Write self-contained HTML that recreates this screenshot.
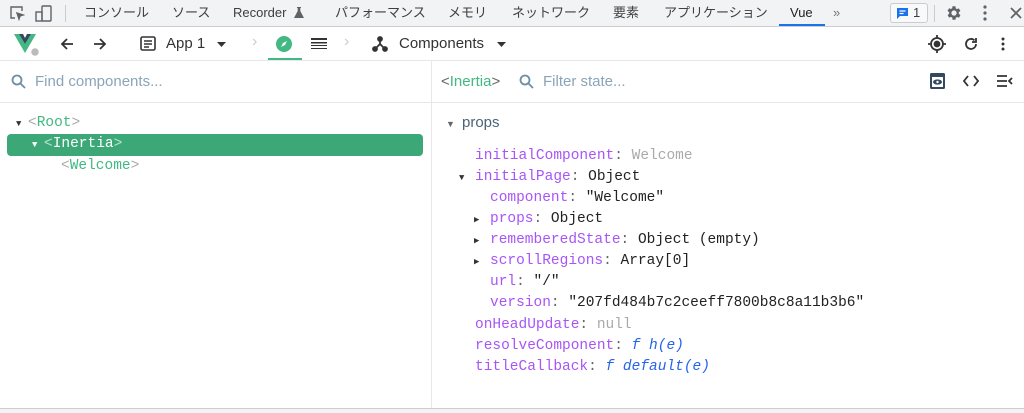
<!DOCTYPE html>
<html><head><meta charset="utf-8"><style>
*{box-sizing:border-box;margin:0;padding:0}
body{width:1024px;height:413px;overflow:hidden;background:#fff;font-family:"Liberation Sans","Noto Sans CJK JP",sans-serif;position:relative}
.abs{position:absolute}
.tabs{left:0;top:0;width:1024px;height:27px;background:#f1f3f4;border-bottom:1px solid #cbcdd1}
.tab{position:absolute;top:0;height:26px;line-height:26px;font-size:13px;color:#3c4043;white-space:nowrap}
.tb{left:0;top:27px;width:1024px;height:34px;border-bottom:1px solid #e5e7eb}
.sr{left:0;top:61px;width:1024px;height:42px;border-bottom:1px solid #e5e7eb}
.vdiv{left:431px;top:61px;width:1px;height:347px;background:#e5e7eb}
.bot{left:0;top:408px;width:1024px;height:5px;background:#f1f3f4;border-top:1px solid #cbcdd1}
.mono{font-family:"Liberation Mono",monospace;font-size:14.5px;white-space:pre}
.k{color:#a855f7}.p{color:#666}.s{color:#222}.g{color:#aaa}.f{color:#2563eb;font-style:italic}
.ln{position:absolute;height:21px;line-height:21px}
.tri{position:absolute;font-size:9px;color:#333}
</style></head><body>
<div class="abs tabs">
 <svg class="abs" style="left:9px;top:5px" width="16" height="16" viewBox="0 0 16 16" fill="none" stroke="#5f6368" stroke-width="1.4"><path d="M6 13H2V2h11v4"/><path d="M8 8l6 2-3 1-1 3z" fill="#5f6368"/></svg>
 <svg class="abs" style="left:35px;top:5px" width="18" height="17" viewBox="0 0 18 17" fill="none" stroke="#5f6368" stroke-width="1.4"><rect x="7" y="1" width="9" height="15" rx="1"/><rect x="1" y="7" width="6" height="9"/></svg>
 <div class="abs" style="left:65px;top:5px;width:1px;height:17px;background:#ccc"></div>
 <span class="tab" style="left:84px">コンソール</span>
 <span class="tab" style="left:172px">ソース</span>
 <span class="tab" style="left:233px">Recorder</span>
 <svg class="abs" style="left:294px;top:7px" width="10" height="11"><path d="M3 0h4v1H6.3v3L10 11H0l3.7-7V1H3z" fill="#5f6368"/></svg>
 <span class="tab" style="left:335px">パフォーマンス</span>
 <span class="tab" style="left:448px">メモリ</span>
 <span class="tab" style="left:512px">ネットワーク</span>
 <span class="tab" style="left:613px">要素</span>
 <span class="tab" style="left:664px">アプリケーション</span>
 <span class="tab" style="left:790px;color:#202124">Vue</span>
 <div class="abs" style="left:779px;top:24px;width:46px;height:2px;background:#1a73e8"></div>
 <span class="tab" style="left:833px;color:#777">»</span>
 <div class="abs" style="left:890px;top:3px;width:38px;height:20px;border:1px solid #ccc;border-radius:3px;background:#f8f9fa"></div>
 <svg class="abs" style="left:896px;top:7px" width="13" height="13" viewBox="0 0 13 13"><path d="M1 1h11v8H4l-3 3z" fill="#1a73e8"/><path d="M3.5 4h6M3.5 6.5h4" stroke="#fff" stroke-width="1.2"/></svg>
 <span class="tab" style="left:913px">1</span>
 <div class="abs" style="left:934px;top:5px;width:1px;height:17px;background:#ccc"></div>
 <svg class="abs" style="left:945px;top:4px" width="18" height="18" viewBox="0 0 24 24"><path fill="#5f6368" d="M19.4 13a7.5 7.5 0 000-2l2.1-1.6-2-3.5-2.5 1a7 7 0 00-1.7-1L15 3h-4l-.4 2.7a7 7 0 00-1.7 1l-2.5-1-2 3.5L6.6 11a7.5 7.5 0 000 2l-2.1 1.6 2 3.5 2.5-1a7 7 0 001.7 1L11 21h4l.4-2.7a7 7 0 001.7-1l2.5 1 2-3.5zM13 15.5a3.5 3.5 0 110-7 3.5 3.5 0 010 7z" transform="translate(-1 0)"/></svg>
 <svg class="abs" style="left:983px;top:5px" width="4" height="16"><circle cx="2" cy="2" r="1.6" fill="#5f6368"/><circle cx="2" cy="8" r="1.6" fill="#5f6368"/><circle cx="2" cy="14" r="1.6" fill="#5f6368"/></svg>
 <svg class="abs" style="left:1010px;top:7px" width="12" height="12" stroke="#5f6368" stroke-width="1.8"><path d="M1 1l10 10M11 1L1 11"/></svg>
</div>
<div class="abs tb">
 <svg class="abs" style="left:14px;top:7px" width="28" height="24" viewBox="0 0 28 24"><path d="M0 0h5l6 10 6-10h5L11 19z" fill="#42b883"/><path d="M5 0h4l2 4 2-4h4l-6 10z" fill="#35495e"/><circle cx="21" cy="18" r="4.5" fill="#bbb" stroke="#fff" stroke-width="1.5"/></svg>
 <svg class="abs" style="left:59px;top:9px" width="16" height="16" fill="none" stroke="#333" stroke-width="1.8"><path d="M14 8H3M8 3L3 8l5 5"/></svg>
 <svg class="abs" style="left:92px;top:9px" width="16" height="16" fill="none" stroke="#333" stroke-width="1.8"><path d="M2 8h11M8 3l5 5-5 5"/></svg>
 <svg class="abs" style="left:140px;top:9px" width="16" height="15" fill="none" stroke="#333" stroke-width="1.6"><rect x="1" y="1" width="14" height="13" rx="1.5"/><path d="M4 5h8M4 8h8M4 11h5"/></svg>
 <span class="abs" style="left:166px;top:8px;font-size:15px;color:#333">App 1</span>
 <svg class="abs" style="left:217px;top:15px" width="9" height="5"><path d="M0 0h9L4.5 5z" fill="#333"/></svg>
 <span class="abs" style="left:252px;top:6px;font-size:16px;color:#ccc">›</span>
 <svg class="abs" style="left:276px;top:9px" width="16" height="16"><circle cx="8" cy="8" r="8" fill="#42b883"/><path d="M11 5L9 9 5 11l2-4z" fill="#fff"/></svg>
 <div class="abs" style="left:268px;top:31px;width:34px;height:2px;background:#42b883"></div>
 <svg class="abs" style="left:311px;top:11px" width="16" height="12" fill="#333"><rect y="0" width="16" height="2"/><rect y="4" width="16" height="1.5"/><rect y="7" width="16" height="1"/><rect y="10" width="16" height="1"/></svg>
 <span class="abs" style="left:344px;top:6px;font-size:16px;color:#ccc">›</span>
 <svg class="abs" style="left:372px;top:9px" width="16" height="16" fill="#333" stroke="#333" stroke-width="1.8"><path d="M8 2v6M8 8l-5 5M8 8l5 5" fill="none"/><circle cx="8" cy="3" r="2"/><circle cx="3" cy="13" r="2"/><circle cx="13" cy="13" r="2"/></svg>
 <span class="abs" style="left:399px;top:8px;font-size:15px;color:#333">Components</span>
 <svg class="abs" style="left:497px;top:15px" width="9" height="5"><path d="M0 0h9L4.5 5z" fill="#333"/></svg>
 <svg class="abs" style="left:928px;top:8px" width="18" height="18" fill="none" stroke="#333" stroke-width="1.8"><circle cx="9" cy="9" r="6"/><circle cx="9" cy="9" r="2.5" fill="#333"/><path d="M9 0v3M9 15v3M0 9h3M15 9h3"/></svg>
 <svg class="abs" style="left:963px;top:9px" width="16" height="16" fill="none" stroke="#333" stroke-width="1.8"><path d="M13 8a5 5 0 11-1.5-3.6"/><path d="M13 2v4H9" fill="none"/></svg>
 <svg class="abs" style="left:1001px;top:10px" width="4" height="14"><circle cx="2" cy="2" r="1.5" fill="#333"/><circle cx="2" cy="7" r="1.5" fill="#333"/><circle cx="2" cy="12" r="1.5" fill="#333"/></svg>
</div>
<div class="abs sr">
 <svg class="abs" style="left:11px;top:13px" width="15" height="15" fill="none" stroke="#6b8fa8" stroke-width="1.8"><circle cx="6" cy="6" r="4.5"/><path d="M9.5 9.5L14 14"/></svg>
 <span class="abs" style="left:35px;top:12px;font-size:15px;color:#8aa4b8">Find components...</span>
 <span class="abs" style="left:441px;top:12px;font-size:15px;color:#666">&lt;<span style="color:#42b883">Inertia</span>&gt;</span>
 <svg class="abs" style="left:519px;top:13px" width="15" height="15" fill="none" stroke="#6b8fa8" stroke-width="1.8"><circle cx="6" cy="6" r="4.5"/><path d="M9.5 9.5L14 14"/></svg>
 <span class="abs" style="left:543px;top:12px;font-size:15px;color:#8aa4b8">Filter state...</span>
 <svg class="abs" style="left:930px;top:12px" width="15" height="16"><rect width="15" height="16" rx="1.5" fill="#35495e"/><rect x="2" y="4" width="11" height="10" fill="#fff"/><ellipse cx="7.5" cy="9" rx="4.5" ry="2.6" fill="#35495e"/><circle cx="7.5" cy="9" r="1.2" fill="#fff"/></svg>
 <svg class="abs" style="left:963px;top:14px" width="16" height="12" fill="none" stroke="#333" stroke-width="1.8"><path d="M5 1L1 6l4 5M11 1l4 5-4 5"/></svg>
 <svg class="abs" style="left:997px;top:14px" width="16" height="12" fill="none" stroke="#333" stroke-width="1.8"><path d="M0 1h10M0 6h10M0 11h10M15 3l-3 3 3 3"/></svg>
</div>
<div class="abs vdiv"></div>
<div class="abs bot"></div>
<div class="abs" style="left:7px;top:134px;width:416px;height:22px;background:#3ca877;border-radius:4px"></div>
<div class="mono">
 <span class="tri" style="left:16px;top:119px">▼</span>
 <span class="ln" style="left:28px;top:113px;color:#aaa">&lt;<span style="color:#42b883">Root</span>&gt;</span>
 <span class="tri" style="left:32px;top:140px;color:#fff">▼</span>
 <span class="ln" style="left:44px;top:134px;color:#b7e4cc">&lt;<span style="color:#fff">Inertia</span>&gt;</span>
 <span class="ln" style="left:61px;top:156px;color:#aaa">&lt;<span style="color:#42b883">Welcome</span>&gt;</span>
</div>
<span class="tri" style="left:446px;top:119px;color:#666">▼</span>
<span class="abs" style="left:462px;top:114px;font-size:15px;color:#4b6478">props</span>
<div class="mono">
 <span class="ln" style="left:475px;top:146px"><span class="k">initialComponent</span><span class="p">: </span><span class="g">Welcome</span></span>
 <span class="tri" style="left:459px;top:173px">▼</span>
 <span class="ln" style="left:475px;top:167px"><span class="k">initialPage</span><span class="p">: </span><span class="s">Object</span></span>
 <span class="ln" style="left:490px;top:188px"><span class="k">component</span><span class="p">: </span><span class="s">"Welcome"</span></span>
 <span class="tri" style="left:474px;top:215px">▶</span>
 <span class="ln" style="left:490px;top:209px"><span class="k">props</span><span class="p">: </span><span class="s">Object</span></span>
 <span class="tri" style="left:474px;top:236px">▶</span>
 <span class="ln" style="left:490px;top:230px"><span class="k">rememberedState</span><span class="p">: </span><span class="s">Object (empty)</span></span>
 <span class="tri" style="left:474px;top:257px">▶</span>
 <span class="ln" style="left:490px;top:251px"><span class="k">scrollRegions</span><span class="p">: </span><span class="s">Array[0]</span></span>
 <span class="ln" style="left:490px;top:272px"><span class="k">url</span><span class="p">: </span><span class="s">"/"</span></span>
 <span class="ln" style="left:490px;top:293px"><span class="k">version</span><span class="p">: </span><span class="s">"207fd484b7c2ceeff7800b8c8a11b3b6"</span></span>
 <span class="ln" style="left:475px;top:315px"><span class="k">onHeadUpdate</span><span class="p">: </span><span class="g">null</span></span>
 <span class="ln" style="left:475px;top:336px"><span class="k">resolveComponent</span><span class="p">: </span><span class="f">f h(e)</span></span>
 <span class="ln" style="left:475px;top:357px"><span class="k">titleCallback</span><span class="p">: </span><span class="f">f default(e)</span></span>
</div>
</body></html>
